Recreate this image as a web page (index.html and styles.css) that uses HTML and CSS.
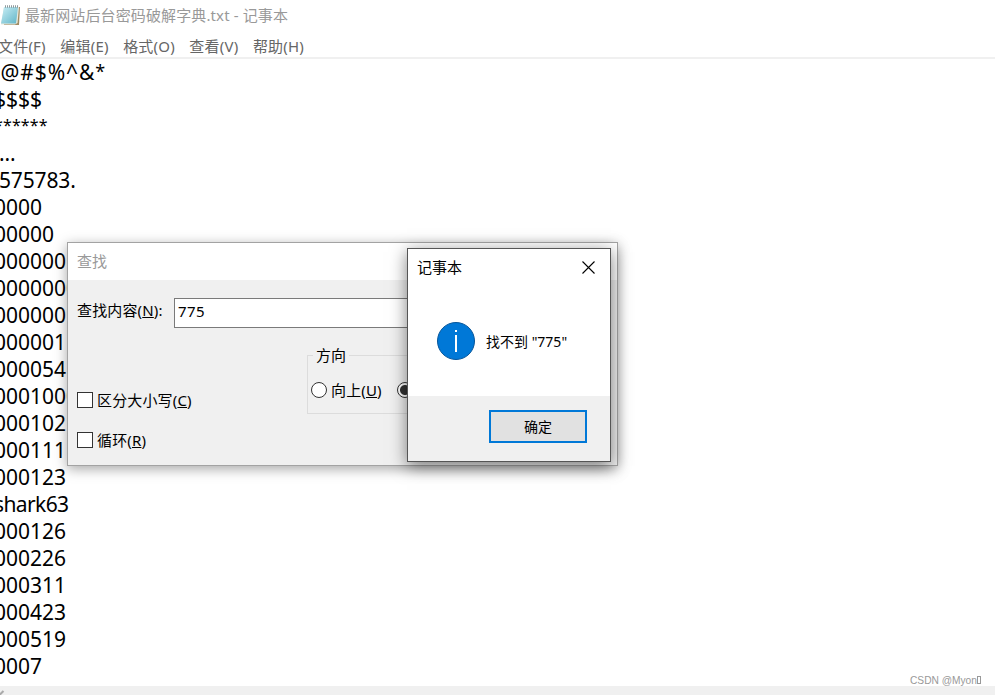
FILE: index.html
```
<!DOCTYPE html>
<html lang="zh-CN">
<head>
    <meta charset="UTF-8">
    <title>记事本</title>
    <link rel="stylesheet" href="styles.css">
</head>
<body>

<div class="notepad">
    <div class="titlebar">
        <svg class="note-icon" width="20" height="22" viewBox="0 0 20 22">
            <defs><linearGradient id="page" x1="0" y1="0" x2="1" y2="1"><stop offset="0" stop-color="#c9eef5"/><stop offset="1" stop-color="#61b5c8"/></linearGradient></defs>
            <path d="M4 3H20L19 21H4Z" fill="#a08c64"/>
            <path d="M4 3H19L17.500 19L15 20.500H1Z" fill="#e8e8dc"/>
            <path d="M4 3H18L16 19.500H1Z" fill="url(#page)"/>
            <path d="M5 2.500H19" stroke="#8d999c" stroke-width="2.500" stroke-dasharray="1 1"/>
        </svg>
        <span class="title">最新网站后台密码破解字典.txt - 记事本</span>
    </div>
    <div class="menu">
        <span>文件(F)</span><span>编辑(E)</span><span>格式(O)</span><span>查看(V)</span><span>帮助(H)</span>
    </div>
    <div class="text">
        <p class="symbols">!@#$%^&amp;<span>*</span></p>
        <p>$$$$</p>
        <p class="stars">*******</p>
        <p class="dots">....</p>
        <p class="dots">.575783.</p>
        <p>0000</p>
        <p>00000</p>
        <p>000000</p>
        <p>0000000</p>
        <p>000000</p>
        <p>000001</p>
        <p>000054</p>
        <p>0001000</p>
        <p>000102</p>
        <p>000111</p>
        <p>000123</p>
        <p class="word">shark63</p>
        <p>000126</p>
        <p>000226</p>
        <p>000311</p>
        <p>000423</p>
        <p>000519</p>
        <p>0007</p>
    </div>
    <div class="scrollbar">
        <svg width="6" height="9" viewBox="0 0 6 9"><path d="M3.500 5L-1 9.500" stroke="#aaa" stroke-width="2"/></svg>
    </div>
</div>

<div class="find">
    <div class="find-title">查找</div>
    <div class="find-body">
        <div class="find-row">
            <label>查找内容(<u>N</u>):</label>
            <div class="field">775</div>
        </div>
        <div class="options">
            <div class="checks">
                <div class="check"><i class="box"></i><span>区分大小写(<u>C</u>)</span></div>
                <div class="check"><i class="box"></i><span>循环(<u>R</u>)</span></div>
            </div>
            <div class="group">
                <span class="legend">方向</span>
                <i class="radio"></i><span class="up">向上(<u>U</u>)</span><i class="radio on"></i>
            </div>
        </div>
    </div>
</div>

<div class="message">
    <div class="message-title">
        <span>记事本</span>
        <svg width="13" height="13" viewBox="0 0 13 13"><path d="M.5 .5L12.500 12.500M12.500 .5L.5 12.500" stroke="#000" stroke-width="1.100"/></svg>
    </div>
    <div class="message-body">
        <svg width="38" height="38" viewBox="0 0 38 38">
            <circle cx="19" cy="19" r="18.500" fill="#0078d7" stroke="#06559a"/>
            <path d="M19 8V10M19 13V30" stroke="#fff" stroke-width="2"/>
        </svg>
        <span>找不到 "775"</span>
    </div>
    <div class="message-footer"><div class="ok">确定</div></div>
</div>

<div class="watermark">CSDN @Myon<i></i></div>

</body>
</html>
```
FILE: styles.css
```
* {box-sizing: border-box; margin: 0; padding: 0;}
body {width: 995px; height: 695px; overflow: hidden; position: relative; background-color: #fff; color: #000; font-family: "Noto Sans", "Noto Sans CJK SC", sans-serif; font-size: 15px;}
svg {display: block; flex: none;}

.notepad {display: flex; flex-direction: column; height: 695px;}
.titlebar {display: flex; height: 33px; padding-top: 4px; color: #999;}
.title {margin-left: 5px; line-height: 23px; font-size: 15px; letter-spacing: 0.120px; white-space: nowrap;}
.menu {display: flex; gap: 14.500px; height: 26px; padding-top: 2px; margin-left: -2px; border-bottom: 2px solid #f0f0f0; color: #666; line-height: 23px; font-size: 15px; letter-spacing: 0.200px;}
.text {flex: 1; margin-left: -6px; font-size: 21px; line-height: 27px; overflow: hidden;}
.text p {height: 27px; white-space: nowrap;}
.symbols {letter-spacing: 0.900px;}
.symbols span {font-size: 18px; line-height: 1; vertical-align: 2px;}
.text .stars {font-size: 16px; line-height: 25px; letter-spacing: 0.150px; text-indent: -9px;}
.dots {text-indent: -0.500px; letter-spacing: -0.150px;}
.word {letter-spacing: -0.600px;}
.scrollbar {height: 9px; background-color: #f0f0f0;}

.find {position: absolute; left: 67px; top: 242px; width: 551px; height: 224px; border: 1px solid #a3a3a3; background-color: #f0f0f0; box-shadow: 0 3px 12px rgba(0, 0, 0, 0.35);}
.find-title {height: 37px; padding-left: 9px; background-color: #fff; color: #999; line-height: 37px;}
.find-body {padding: 18px 9px 0;}
.find-row {display: flex; height: 30px;}
.find-row label {width: 97px; line-height: 24px; letter-spacing: 0.150px; white-space: nowrap;}
.field {width: 330px; height: 30px; padding-left: 3px; border: 1px solid #7a7a7a; background-color: #fff; line-height: 24px; letter-spacing: 0.400px;}
.options {display: flex; padding-top: 27px;}
.checks {width: 230px; padding-top: 33px;}
.check {display: flex; align-items: center; height: 24px; margin-bottom: 16px; letter-spacing: 0.150px;}
.check span {padding-bottom: 2px;}
.box {width: 16px; height: 16px; margin-right: 4px; border: 1px solid #333; background-color: #fff;}
.group {position: relative; display: flex; align-items: center; width: 180px; height: 59px; padding: 10px 0 0 3px; border: 1px solid #dcdcdc;}
.legend {position: absolute; left: 5px; top: -12px; padding: 0 3px; background-color: #f0f0f0; line-height: 23px;}
.radio {flex: none; width: 16px; height: 16px; border: 1px solid #333; border-radius: 50%; background-color: #fff;}
.radio.on {background: radial-gradient(circle, #333 4.500px, #fff 5.500px);}
.up {width: 70px; padding-left: 4px; letter-spacing: 0.150px; white-space: nowrap;}

.message {position: absolute; left: 407px; top: 248px; width: 204px; height: 214px; border: 1px solid #555; background-color: #fff; box-shadow: 0 4px 16px rgba(0, 0, 0, 0.5);}
.message-title {display: flex; justify-content: space-between; align-items: center; height: 37px; padding: 0 15px 0 9px;}
.message-title span {padding-bottom: 2px;}
.message-body {display: flex; align-items: center; height: 110px; padding-left: 29px; font-size: 14px;}
.message-body span {margin-left: 11px; white-space: nowrap;}
.message-footer {display: flex; justify-content: flex-end; height: 65px; padding: 14px 23px; background-color: #f0f0f0;}
.ok {width: 98px; height: 33px; border: 2px solid #0078d7; background-color: #e1e1e1; font-size: 14px; line-height: 30px; text-align: center;}

.watermark {position: absolute; left: 910px; top: 674px; color: #999; font: 10.200px/13px "Liberation Sans", sans-serif; white-space: nowrap;}
.watermark i {display: inline-block; width: 4px; height: 8px; border: 1px solid #999;}
```
